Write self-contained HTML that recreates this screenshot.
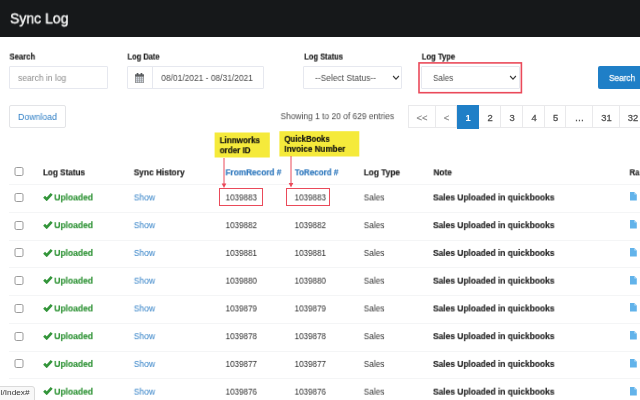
<!DOCTYPE html>
<html><head><meta charset="utf-8"><title>Sync Log</title>
<style>
*{box-sizing:border-box;margin:0;padding:0}
html,body{width:640px;height:400px;overflow:hidden;background:#fff;font-family:"Liberation Sans",sans-serif;color:#333}
body{position:relative}
.abs{position:absolute}
.t{position:absolute;white-space:nowrap;line-height:10px;transform-origin:0 50%;will-change:transform}
.b{font-weight:bold}
.hdr{left:0;top:0;width:640px;height:37px;background:#16181a}
.box{border:1px solid #e6e8ef;background:#fff;border-radius:1px}
.cb{width:9px;height:9px;border:1px solid #8c8c8c;border-radius:2px;background:#fff}
.sep{left:9px;width:631px;height:1px;background:#f4f5f6}
.pg{top:105px;height:23px;border:1px solid #e9e9eb;border-left:none;background:#fff}
.yl{background:#f5ea3b}
.red{border:1px solid #ea4a5a}
</style></head><body>
<div class="abs hdr"></div>
<div class="abs box" style="left:9px;top:66px;width:99px;height:23px"></div>
<div class="abs box" style="left:127px;top:66px;width:137px;height:23px"></div>
<div class="abs" style="left:152px;top:67px;width:1px;height:21px;background:#e6e8ef"></div>
<svg class="abs" style="left:135.4px;top:72.7px" width="9" height="10.2" viewBox="0 0 9 10.2"><rect x="0" y="1.4" width="9" height="8.8" rx=".8" fill="#8f8f8f"/><rect x="0" y="1.4" width="9" height="1.9" fill="#606366"/><rect x="1.7" y="0" width="1.7" height="2.6" rx=".5" fill="#55585b"/><rect x="5.6" y="0" width="1.7" height="2.6" rx=".5" fill="#55585b"/><g fill="#cfd6df"><rect x="0.9" y="3.9" width="1.5" height="5.5"/><rect x="3.0" y="3.9" width="1.3" height="5.5"/><rect x="4.9" y="3.9" width="1.3" height="5.5"/><rect x="6.8" y="3.9" width="1.4" height="5.5"/></g><g fill="#8f8f8f" opacity=".55"><rect x="0.9" y="5.4" width="7.3" height=".6"/><rect x="0.9" y="7.3" width="7.3" height=".6"/></g></svg>
<div class="abs box" style="left:303px;top:66px;width:99px;height:23px"></div>
<svg class="abs" style="left:391.5px;top:75px" width="8" height="6" viewBox="0 0 8 6"><path d="M1.1 1 L4 4.1 L6.9 1" fill="none" stroke="#3a3a3a" stroke-width="1.15"/></svg>
<svg class="abs" style="left:417px;top:61px" width="107" height="34" viewBox="0 0 107 34"><rect x="2" y="1.9" width="102.4" height="29.8" fill="none" stroke="#ea4a5a" stroke-width="1.6"/></svg>
<div class="abs box" style="left:421px;top:66px;width:99px;height:23px"></div>
<svg class="abs" style="left:509px;top:75px" width="8" height="6" viewBox="0 0 8 6"><path d="M1.1 1 L4 4.1 L6.9 1" fill="none" stroke="#3a3a3a" stroke-width="1.15"/></svg>
<div class="abs" style="left:598px;top:66px;width:50px;height:23px;background:#1f7fc7;border-radius:2px"></div>
<div class="abs box" style="left:9px;top:105px;width:57px;height:23px;border-color:#e3e4e7;border-radius:2px"></div>
<div class="abs" style="left:407.5px;top:105px;width:1px;height:23px;background:#e9e9eb"></div>
<div class="abs pg" style="left:408px;width:28px;border-left:1px solid #e9e9eb;"></div>
<div class="t" style="left:408px;width:28px;top:112.9px;font-size:9.4px;text-align:center;color:#8a8a8a;-webkit-text-stroke:.2px #8a8a8a;">&lt;&lt;</div>
<div class="abs pg" style="left:436px;width:21px;"></div>
<div class="t" style="left:436px;width:21px;top:112.9px;font-size:9.4px;text-align:center;color:#8a8a8a;-webkit-text-stroke:.2px #8a8a8a;">&lt;</div>
<div class="abs pg" style="left:457px;width:22px;background:#1f7fc7;border-color:#1f7fc7;height:24px;"></div>
<div class="t" style="left:457px;width:22px;top:112.9px;font-size:9.4px;text-align:center;color:#fff;font-weight:bold;">1</div>
<div class="abs pg" style="left:479px;width:22px;"></div>
<div class="t" style="left:479px;width:22px;top:112.9px;font-size:9.4px;text-align:center;color:#505050;-webkit-text-stroke:.3px #505050;">2</div>
<div class="abs pg" style="left:501px;width:22px;"></div>
<div class="t" style="left:501px;width:22px;top:112.9px;font-size:9.4px;text-align:center;color:#505050;-webkit-text-stroke:.3px #505050;">3</div>
<div class="abs pg" style="left:523px;width:22px;"></div>
<div class="t" style="left:523px;width:22px;top:112.9px;font-size:9.4px;text-align:center;color:#505050;-webkit-text-stroke:.3px #505050;">4</div>
<div class="abs pg" style="left:545px;width:21px;"></div>
<div class="t" style="left:545px;width:21px;top:112.9px;font-size:9.4px;text-align:center;color:#505050;-webkit-text-stroke:.3px #505050;">5</div>
<div class="abs pg" style="left:566px;width:27px;"></div>
<div class="t" style="left:566px;width:27px;top:112.9px;font-size:9.4px;text-align:center;color:#505050;-webkit-text-stroke:.3px #505050;">&hellip;</div>
<div class="abs pg" style="left:593px;width:27px;"></div>
<div class="t" style="left:593px;width:27px;top:112.9px;font-size:9.4px;text-align:center;color:#505050;-webkit-text-stroke:.3px #505050;">31</div>
<div class="abs pg" style="left:620px;width:26px;"></div>
<div class="t" style="left:620px;width:26px;top:112.9px;font-size:9.4px;text-align:center;color:#505050;-webkit-text-stroke:.3px #505050;">32</div>
<svg class="abs" style="left:210px;top:128px" width="155" height="34" viewBox="0 0 155 34"><rect x="4.6" y="4.5" width="55.2" height="25" fill="#f5ea3b"/><rect x="69.4" y="3.2" width="79.9" height="25.3" fill="#f5ea3b"/></svg>
<svg class="abs" style="left:14px;top:166.90px" width="10" height="10" viewBox="0 0 10 10"><rect x="1" y=".5" width="8" height="8" rx="1.4" fill="#fff" stroke="#909090" stroke-width=".9"/></svg>
<div class="abs sep" style="top:184.00px"></div>
<svg class="abs" style="left:14px;top:192.90px" width="10" height="10" viewBox="0 0 10 10"><rect x="1" y=".5" width="8" height="8" rx="1.4" fill="#fff" stroke="#909090" stroke-width=".9"/></svg>
<svg class="abs" style="left:43px;top:193.05px" width="10" height="8" viewBox="0 0 10 8"><path d="M1.1 3.8 L3.7 6.3 L8.7 0.9" fill="none" stroke="#33953a" stroke-width="2.7"/></svg>
<svg class="abs" style="left:630px;top:192.40px" width="7" height="9" viewBox="0 0 7 9"><path d="M0 0 H4.3 L6.8 2.5 V8.6 H0 Z" fill="#62b3ea"/><path d="M4.3 0 V2.5 H6.8 Z" fill="#b5dbf5"/></svg>
<div class="abs sep" style="top:211.75px"></div>
<svg class="abs" style="left:14px;top:220.65px" width="10" height="10" viewBox="0 0 10 10"><rect x="1" y=".5" width="8" height="8" rx="1.4" fill="#fff" stroke="#909090" stroke-width=".9"/></svg>
<svg class="abs" style="left:43px;top:220.80px" width="10" height="8" viewBox="0 0 10 8"><path d="M1.1 3.8 L3.7 6.3 L8.7 0.9" fill="none" stroke="#33953a" stroke-width="2.7"/></svg>
<svg class="abs" style="left:630px;top:220.15px" width="7" height="9" viewBox="0 0 7 9"><path d="M0 0 H4.3 L6.8 2.5 V8.6 H0 Z" fill="#62b3ea"/><path d="M4.3 0 V2.5 H6.8 Z" fill="#b5dbf5"/></svg>
<div class="abs sep" style="top:239.50px"></div>
<svg class="abs" style="left:14px;top:248.40px" width="10" height="10" viewBox="0 0 10 10"><rect x="1" y=".5" width="8" height="8" rx="1.4" fill="#fff" stroke="#909090" stroke-width=".9"/></svg>
<svg class="abs" style="left:43px;top:248.55px" width="10" height="8" viewBox="0 0 10 8"><path d="M1.1 3.8 L3.7 6.3 L8.7 0.9" fill="none" stroke="#33953a" stroke-width="2.7"/></svg>
<svg class="abs" style="left:630px;top:247.90px" width="7" height="9" viewBox="0 0 7 9"><path d="M0 0 H4.3 L6.8 2.5 V8.6 H0 Z" fill="#62b3ea"/><path d="M4.3 0 V2.5 H6.8 Z" fill="#b5dbf5"/></svg>
<div class="abs sep" style="top:267.25px"></div>
<svg class="abs" style="left:14px;top:276.15px" width="10" height="10" viewBox="0 0 10 10"><rect x="1" y=".5" width="8" height="8" rx="1.4" fill="#fff" stroke="#909090" stroke-width=".9"/></svg>
<svg class="abs" style="left:43px;top:276.30px" width="10" height="8" viewBox="0 0 10 8"><path d="M1.1 3.8 L3.7 6.3 L8.7 0.9" fill="none" stroke="#33953a" stroke-width="2.7"/></svg>
<svg class="abs" style="left:630px;top:275.65px" width="7" height="9" viewBox="0 0 7 9"><path d="M0 0 H4.3 L6.8 2.5 V8.6 H0 Z" fill="#62b3ea"/><path d="M4.3 0 V2.5 H6.8 Z" fill="#b5dbf5"/></svg>
<div class="abs sep" style="top:295.00px"></div>
<svg class="abs" style="left:14px;top:303.90px" width="10" height="10" viewBox="0 0 10 10"><rect x="1" y=".5" width="8" height="8" rx="1.4" fill="#fff" stroke="#909090" stroke-width=".9"/></svg>
<svg class="abs" style="left:43px;top:304.05px" width="10" height="8" viewBox="0 0 10 8"><path d="M1.1 3.8 L3.7 6.3 L8.7 0.9" fill="none" stroke="#33953a" stroke-width="2.7"/></svg>
<svg class="abs" style="left:630px;top:303.40px" width="7" height="9" viewBox="0 0 7 9"><path d="M0 0 H4.3 L6.8 2.5 V8.6 H0 Z" fill="#62b3ea"/><path d="M4.3 0 V2.5 H6.8 Z" fill="#b5dbf5"/></svg>
<div class="abs sep" style="top:322.75px"></div>
<svg class="abs" style="left:14px;top:331.65px" width="10" height="10" viewBox="0 0 10 10"><rect x="1" y=".5" width="8" height="8" rx="1.4" fill="#fff" stroke="#909090" stroke-width=".9"/></svg>
<svg class="abs" style="left:43px;top:331.80px" width="10" height="8" viewBox="0 0 10 8"><path d="M1.1 3.8 L3.7 6.3 L8.7 0.9" fill="none" stroke="#33953a" stroke-width="2.7"/></svg>
<svg class="abs" style="left:630px;top:331.15px" width="7" height="9" viewBox="0 0 7 9"><path d="M0 0 H4.3 L6.8 2.5 V8.6 H0 Z" fill="#62b3ea"/><path d="M4.3 0 V2.5 H6.8 Z" fill="#b5dbf5"/></svg>
<div class="abs sep" style="top:350.50px"></div>
<svg class="abs" style="left:14px;top:359.40px" width="10" height="10" viewBox="0 0 10 10"><rect x="1" y=".5" width="8" height="8" rx="1.4" fill="#fff" stroke="#909090" stroke-width=".9"/></svg>
<svg class="abs" style="left:43px;top:359.55px" width="10" height="8" viewBox="0 0 10 8"><path d="M1.1 3.8 L3.7 6.3 L8.7 0.9" fill="none" stroke="#33953a" stroke-width="2.7"/></svg>
<svg class="abs" style="left:630px;top:358.90px" width="7" height="9" viewBox="0 0 7 9"><path d="M0 0 H4.3 L6.8 2.5 V8.6 H0 Z" fill="#62b3ea"/><path d="M4.3 0 V2.5 H6.8 Z" fill="#b5dbf5"/></svg>
<div class="abs sep" style="top:378.25px"></div>
<svg class="abs" style="left:14px;top:387.15px" width="10" height="10" viewBox="0 0 10 10"><rect x="1" y=".5" width="8" height="8" rx="1.4" fill="#fff" stroke="#909090" stroke-width=".9"/></svg>
<svg class="abs" style="left:43px;top:387.30px" width="10" height="8" viewBox="0 0 10 8"><path d="M1.1 3.8 L3.7 6.3 L8.7 0.9" fill="none" stroke="#33953a" stroke-width="2.7"/></svg>
<svg class="abs" style="left:630px;top:386.65px" width="7" height="9" viewBox="0 0 7 9"><path d="M0 0 H4.3 L6.8 2.5 V8.6 H0 Z" fill="#62b3ea"/><path d="M4.3 0 V2.5 H6.8 Z" fill="#b5dbf5"/></svg>
<div class="abs" style="left:-2px;top:386px;width:36.5px;height:17px;background:#f8f8f8;border:1px solid #dadada;border-radius:0 3px 0 0"></div>
<div class="t" style="left:10px;top:13px;font-size:15px;color:#fff;transform:translate(0.00px,0.40px) scaleX(0.935);-webkit-text-stroke:.3px #fff;">Sync Log</div>
<div class="t b" style="left:9px;top:51px;font-size:8.6px;color:#222;transform:translate(0.50px,0.52px) scaleX(0.889);-webkit-text-stroke:.18px #222;">Search</div>
<div class="t" style="left:18px;top:72px;font-size:9px;color:#8c8c8c;transform:translate(0.00px,0.88px) scaleX(0.945);">search in log</div>
<div class="t b" style="left:127px;top:51px;font-size:8.6px;color:#222;transform:translate(0.50px,0.52px) scaleX(0.870);-webkit-text-stroke:.18px #222;">Log Date</div>
<div class="t" style="left:161px;top:72px;font-size:9px;color:#4a4a4a;transform:translate(0.25px,0.88px) scaleX(0.935);">08/01/2021 - 08/31/2021</div>
<div class="t b" style="left:304px;top:51px;font-size:8.6px;color:#222;transform:translate(0.25px,0.52px) scaleX(0.873);-webkit-text-stroke:.18px #222;">Log Status</div>
<div class="t" style="left:315px;top:72px;font-size:9px;color:#4a4a4a;transform:translate(0.00px,0.88px) scaleX(0.938);">--Select Status--</div>
<div class="t b" style="left:421px;top:51px;font-size:8.6px;color:#222;transform:translate(0.75px,0.52px) scaleX(0.888);-webkit-text-stroke:.18px #222;">Log Type</div>
<div class="t" style="left:433px;top:72px;font-size:9px;color:#4a4a4a;transform:translate(0.00px,0.88px) scaleX(0.897);">Sales</div>
<div class="t" style="left:609px;top:72px;font-size:9px;color:#fff;transform:translate(0.00px,0.88px) scaleX(0.915);-webkit-text-stroke:.25px #fff;">Search</div>
<div class="t" style="left:18px;top:111px;font-size:9px;color:#2f7fc6;transform:translate(0.00px,0.88px) scaleX(0.974);">Download</div>
<div class="t" style="left:280px;top:111px;font-size:9px;color:#4a4a4a;transform:translate(0.50px,0.13px) scaleX(0.935);">Showing 1 to 20 of 629 entries</div>
<div class="t b" style="left:219px;top:135px;font-size:8.8px;color:#111;transform:translate(0.70px,0.25px) scaleX(0.916);-webkit-text-stroke:.18px #111;">Linnworks</div>
<div class="t b" style="left:219px;top:145px;font-size:8.8px;color:#111;transform:translate(0.70px,0.25px) scaleX(0.916);-webkit-text-stroke:.18px #111;">order ID</div>
<div class="t b" style="left:284px;top:133px;font-size:8.8px;color:#111;transform:translate(0.40px,0.85px) scaleX(0.882);-webkit-text-stroke:.18px #111;">QuickBooks</div>
<div class="t b" style="left:284px;top:143px;font-size:8.8px;color:#111;transform:translate(0.40px,0.85px) scaleX(0.923);-webkit-text-stroke:.18px #111;">Invoice Number</div>
<div class="t b" style="left:43px;top:167px;font-size:8.8px;color:#222;transform:translate(0.00px,0.35px) scaleX(0.924);-webkit-text-stroke:.18px #222;">Log Status</div>
<div class="t b" style="left:133px;top:167px;font-size:8.8px;color:#222;transform:translate(0.75px,0.35px) scaleX(0.944);-webkit-text-stroke:.18px #222;">Sync History</div>
<div class="t b" style="left:225px;top:167px;font-size:8.8px;color:#2f78bd;transform:translate(0.50px,0.35px) scaleX(0.935);-webkit-text-stroke:.18px #2f78bd;">FromRecord #</div>
<div class="t b" style="left:294px;top:167px;font-size:8.8px;color:#2f78bd;transform:translate(0.70px,0.35px) scaleX(0.915);-webkit-text-stroke:.18px #2f78bd;">ToRecord #</div>
<div class="t b" style="left:363px;top:167px;font-size:8.8px;color:#222;transform:translate(0.75px,0.35px) scaleX(0.943);-webkit-text-stroke:.18px #222;">Log Type</div>
<div class="t b" style="left:433px;top:167px;font-size:8.8px;color:#222;transform:translate(0.50px,0.35px) scaleX(0.933);-webkit-text-stroke:.18px #222;">Note</div>
<div class="t b" style="left:629px;top:167px;font-size:8.8px;color:#222;transform:translate(0.50px,0.35px) scaleX(0.889);-webkit-text-stroke:.18px #222;">Ra</div>
<div class="t b" style="left:54px;top:192px;font-size:9px;color:#33953a;transform:translate(0.25px,0.38px) scaleX(0.945);-webkit-text-stroke:.18px #33953a;">Uploaded</div>
<div class="t" style="left:133px;top:192px;font-size:9px;color:#2f7fc6;transform:translate(0.75px,0.38px) scaleX(0.944);">Show</div>
<div class="t" style="left:225px;top:192px;font-size:9px;color:#2e2e2e;transform:translate(0.60px,0.38px) scaleX(0.896);">1039883</div>
<div class="t" style="left:294px;top:192px;font-size:9px;color:#2e2e2e;transform:translate(0.60px,0.38px) scaleX(0.896);">1039883</div>
<div class="t" style="left:363px;top:192px;font-size:9px;color:#333;transform:translate(0.75px,0.38px) scaleX(0.917);">Sales</div>
<div class="t b" style="left:433px;top:192px;font-size:9px;color:#262626;transform:translate(0.00px,0.38px) scaleX(0.934);-webkit-text-stroke:.18px #262626;">Sales Uploaded in quickbooks</div>
<div class="t b" style="left:54px;top:220px;font-size:9px;color:#33953a;transform:translate(0.25px,0.13px) scaleX(0.945);-webkit-text-stroke:.18px #33953a;">Uploaded</div>
<div class="t" style="left:133px;top:220px;font-size:9px;color:#2f7fc6;transform:translate(0.75px,0.13px) scaleX(0.944);">Show</div>
<div class="t" style="left:225px;top:220px;font-size:9px;color:#2e2e2e;transform:translate(0.60px,0.13px) scaleX(0.896);">1039882</div>
<div class="t" style="left:294px;top:220px;font-size:9px;color:#2e2e2e;transform:translate(0.60px,0.13px) scaleX(0.896);">1039882</div>
<div class="t" style="left:363px;top:220px;font-size:9px;color:#333;transform:translate(0.75px,0.13px) scaleX(0.917);">Sales</div>
<div class="t b" style="left:433px;top:220px;font-size:9px;color:#262626;transform:translate(0.00px,0.13px) scaleX(0.934);-webkit-text-stroke:.18px #262626;">Sales Uploaded in quickbooks</div>
<div class="t b" style="left:54px;top:247px;font-size:9px;color:#33953a;transform:translate(0.25px,0.88px) scaleX(0.945);-webkit-text-stroke:.18px #33953a;">Uploaded</div>
<div class="t" style="left:133px;top:247px;font-size:9px;color:#2f7fc6;transform:translate(0.75px,0.88px) scaleX(0.944);">Show</div>
<div class="t" style="left:225px;top:247px;font-size:9px;color:#2e2e2e;transform:translate(0.60px,0.88px) scaleX(0.896);">1039881</div>
<div class="t" style="left:294px;top:247px;font-size:9px;color:#2e2e2e;transform:translate(0.60px,0.88px) scaleX(0.896);">1039881</div>
<div class="t" style="left:363px;top:247px;font-size:9px;color:#333;transform:translate(0.75px,0.88px) scaleX(0.917);">Sales</div>
<div class="t b" style="left:433px;top:247px;font-size:9px;color:#262626;transform:translate(0.00px,0.88px) scaleX(0.934);-webkit-text-stroke:.18px #262626;">Sales Uploaded in quickbooks</div>
<div class="t b" style="left:54px;top:275px;font-size:9px;color:#33953a;transform:translate(0.25px,0.63px) scaleX(0.945);-webkit-text-stroke:.18px #33953a;">Uploaded</div>
<div class="t" style="left:133px;top:275px;font-size:9px;color:#2f7fc6;transform:translate(0.75px,0.63px) scaleX(0.944);">Show</div>
<div class="t" style="left:225px;top:275px;font-size:9px;color:#2e2e2e;transform:translate(0.60px,0.63px) scaleX(0.896);">1039880</div>
<div class="t" style="left:294px;top:275px;font-size:9px;color:#2e2e2e;transform:translate(0.60px,0.63px) scaleX(0.896);">1039880</div>
<div class="t" style="left:363px;top:275px;font-size:9px;color:#333;transform:translate(0.75px,0.63px) scaleX(0.917);">Sales</div>
<div class="t b" style="left:433px;top:275px;font-size:9px;color:#262626;transform:translate(0.00px,0.63px) scaleX(0.934);-webkit-text-stroke:.18px #262626;">Sales Uploaded in quickbooks</div>
<div class="t b" style="left:54px;top:303px;font-size:9px;color:#33953a;transform:translate(0.25px,0.38px) scaleX(0.945);-webkit-text-stroke:.18px #33953a;">Uploaded</div>
<div class="t" style="left:133px;top:303px;font-size:9px;color:#2f7fc6;transform:translate(0.75px,0.38px) scaleX(0.944);">Show</div>
<div class="t" style="left:225px;top:303px;font-size:9px;color:#2e2e2e;transform:translate(0.60px,0.38px) scaleX(0.896);">1039879</div>
<div class="t" style="left:294px;top:303px;font-size:9px;color:#2e2e2e;transform:translate(0.60px,0.38px) scaleX(0.896);">1039879</div>
<div class="t" style="left:363px;top:303px;font-size:9px;color:#333;transform:translate(0.75px,0.38px) scaleX(0.917);">Sales</div>
<div class="t b" style="left:433px;top:303px;font-size:9px;color:#262626;transform:translate(0.00px,0.38px) scaleX(0.934);-webkit-text-stroke:.18px #262626;">Sales Uploaded in quickbooks</div>
<div class="t b" style="left:54px;top:331px;font-size:9px;color:#33953a;transform:translate(0.25px,0.13px) scaleX(0.945);-webkit-text-stroke:.18px #33953a;">Uploaded</div>
<div class="t" style="left:133px;top:331px;font-size:9px;color:#2f7fc6;transform:translate(0.75px,0.13px) scaleX(0.944);">Show</div>
<div class="t" style="left:225px;top:331px;font-size:9px;color:#2e2e2e;transform:translate(0.60px,0.13px) scaleX(0.896);">1039878</div>
<div class="t" style="left:294px;top:331px;font-size:9px;color:#2e2e2e;transform:translate(0.60px,0.13px) scaleX(0.896);">1039878</div>
<div class="t" style="left:363px;top:331px;font-size:9px;color:#333;transform:translate(0.75px,0.13px) scaleX(0.917);">Sales</div>
<div class="t b" style="left:433px;top:331px;font-size:9px;color:#262626;transform:translate(0.00px,0.13px) scaleX(0.934);-webkit-text-stroke:.18px #262626;">Sales Uploaded in quickbooks</div>
<div class="t b" style="left:54px;top:358px;font-size:9px;color:#33953a;transform:translate(0.25px,0.88px) scaleX(0.945);-webkit-text-stroke:.18px #33953a;">Uploaded</div>
<div class="t" style="left:133px;top:358px;font-size:9px;color:#2f7fc6;transform:translate(0.75px,0.88px) scaleX(0.944);">Show</div>
<div class="t" style="left:225px;top:358px;font-size:9px;color:#2e2e2e;transform:translate(0.60px,0.88px) scaleX(0.896);">1039877</div>
<div class="t" style="left:294px;top:358px;font-size:9px;color:#2e2e2e;transform:translate(0.60px,0.88px) scaleX(0.896);">1039877</div>
<div class="t" style="left:363px;top:358px;font-size:9px;color:#333;transform:translate(0.75px,0.88px) scaleX(0.917);">Sales</div>
<div class="t b" style="left:433px;top:358px;font-size:9px;color:#262626;transform:translate(0.00px,0.88px) scaleX(0.934);-webkit-text-stroke:.18px #262626;">Sales Uploaded in quickbooks</div>
<div class="t b" style="left:54px;top:386px;font-size:9px;color:#33953a;transform:translate(0.25px,0.63px) scaleX(0.945);-webkit-text-stroke:.18px #33953a;">Uploaded</div>
<div class="t" style="left:133px;top:386px;font-size:9px;color:#2f7fc6;transform:translate(0.75px,0.63px) scaleX(0.944);">Show</div>
<div class="t" style="left:225px;top:386px;font-size:9px;color:#2e2e2e;transform:translate(0.60px,0.63px) scaleX(0.896);">1039876</div>
<div class="t" style="left:294px;top:386px;font-size:9px;color:#2e2e2e;transform:translate(0.60px,0.63px) scaleX(0.896);">1039876</div>
<div class="t" style="left:363px;top:386px;font-size:9px;color:#333;transform:translate(0.75px,0.63px) scaleX(0.917);">Sales</div>
<div class="t b" style="left:433px;top:386px;font-size:9px;color:#262626;transform:translate(0.00px,0.63px) scaleX(0.934);-webkit-text-stroke:.18px #262626;">Sales Uploaded in quickbooks</div>
<div class="t" style="left:-2px;top:388px;font-size:7.9px;color:#333;transform:translate(0.80px,0.36px) scaleX(1.048);">il/Index#</div>
<svg class="abs" style="left:221.4px;top:157.5px" width="6" height="30.5" viewBox="0 0 6 30.5"><path d="M3 0 V26.5" stroke="#ea4a5a" stroke-width="1" fill="none"/><path d="M0.7 25.599999999999994 H5.3 L3 30.0 Z" fill="#ea4a5a"/></svg>
<svg class="abs" style="left:287.5px;top:156px" width="6" height="32" viewBox="0 0 6 32"><path d="M3 0 V28" stroke="#ea4a5a" stroke-width="1" fill="none"/><path d="M0.7 27.099999999999994 H5.3 L3 31.5 Z" fill="#ea4a5a"/></svg>
<div class="abs red" style="left:219.3px;top:188px;width:43.6px;height:18px"></div>
<div class="abs red" style="left:286.4px;top:188px;width:43.6px;height:18px"></div>
</body></html>
